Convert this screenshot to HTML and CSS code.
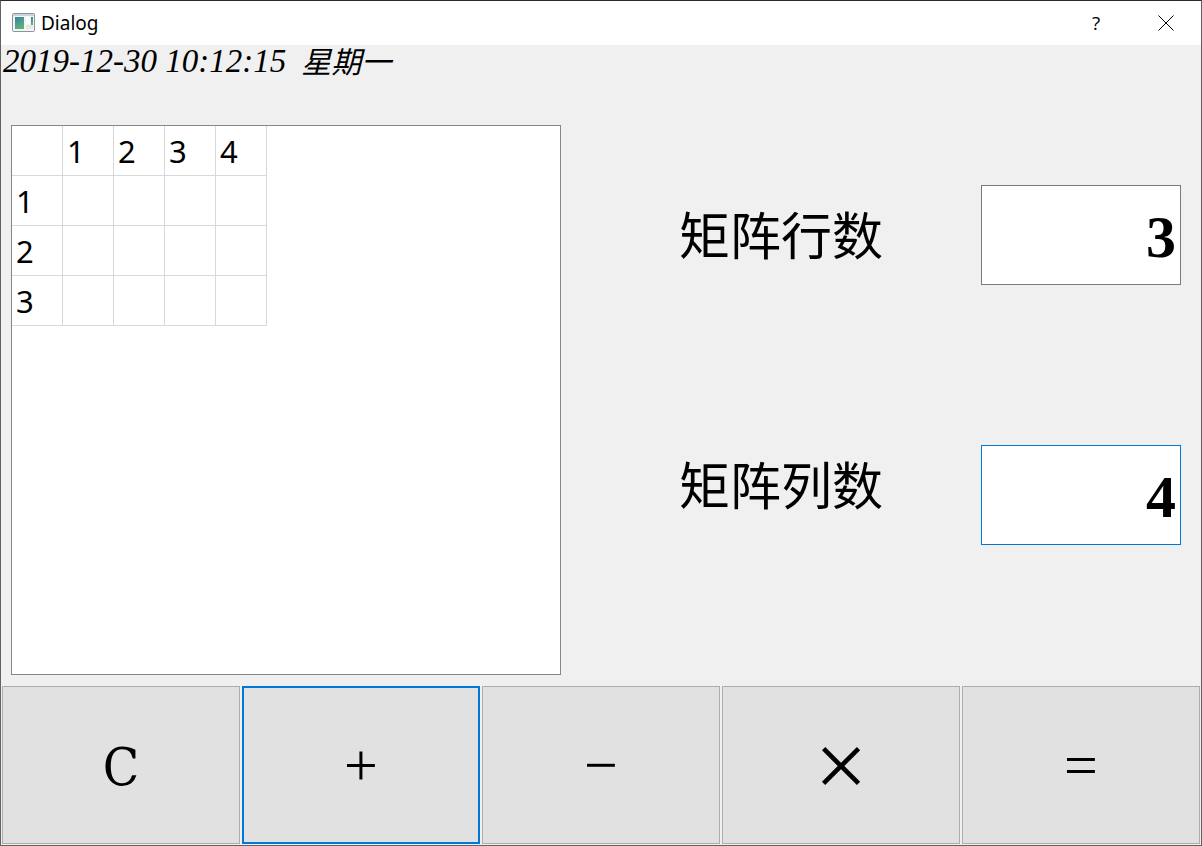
FILE: index.html
```
<!DOCTYPE html>
<html lang="zh-CN">
<head>
<meta charset="utf-8">
<meta name="viewport" content="width=device-width, initial-scale=1">
<title>Dialog</title>
<link rel="stylesheet" href="styles.css">
</head>
<body>
<div class="dialog">
  <header class="titlebar">
    <svg class="app-icon" viewBox="0 0 24 20" aria-hidden="true">
      <defs>
        <linearGradient id="pane" x1="0" y1="0" x2="0.4" y2="1">
          <stop offset="0" stop-color="#3d7fa5"/>
          <stop offset="1" stop-color="#5cb377"/>
        </linearGradient>
      </defs>
      <rect x="0.5" y="0.5" width="22" height="18" rx="1" fill="#f4f5f6" stroke="#8d9398"/>
      <rect x="1" y="1" width="21" height="2" fill="#ccd2da"/>
      <rect x="3" y="4" width="9" height="12" fill="url(#pane)"/>
      <rect x="14" y="4" width="4" height="7" fill="#fff"/>
      <rect x="14" y="12" width="7" height="4" fill="#e6e6e6"/>
      <rect x="19" y="4" width="2" height="8" fill="url(#pane)"/>
    </svg>
    <h1 class="title">Dialog</h1>
    <button class="caption-button" type="button" aria-label="Help">?</button>
    <button class="caption-button" type="button" aria-label="Close">
      <svg class="close-icon" viewBox="0 0 16 16" aria-hidden="true"><path d="M0.5 0.5 15.5 15.5M15.5 0.5 0.5 15.5" stroke="#000" fill="none"/></svg>
    </button>
  </header>
  <p class="clock"><span>2019-12-30 10:12:15</span><span class="weekday">星期一</span></p>
  <main class="content">
    <div class="table-frame">
      <table class="matrix">
        <tr><td></td><td>1</td><td>2</td><td>3</td><td>4</td></tr>
        <tr><td>1</td><td></td><td></td><td></td><td></td></tr>
        <tr><td>2</td><td></td><td></td><td></td><td></td></tr>
        <tr><td>3</td><td></td><td></td><td></td><td></td></tr>
      </table>
    </div>
    <form class="settings">
      <div class="field">
        <label class="field-label" for="rows">矩阵行数</label>
        <input class="field-input" id="rows" type="text" value="3">
      </div>
      <div class="field">
        <label class="field-label field-label-short" for="cols">矩阵列数</label>
        <input class="field-input field-input-active" id="cols" type="text" value="4">
      </div>
    </form>
  </main>
  <div class="keys">
    <button class="key key-letter" type="button">C</button>
    <button class="key key-default" type="button">+</button>
    <button class="key" type="button">−</button>
    <button class="key key-times" type="button">×</button>
    <button class="key" type="button">=</button>
  </div>
</div>
</body>
</html>
```
FILE: styles.css
```
* { box-sizing: border-box; }
body { margin: 0; color: #000; }

.dialog {
  display: flex;
  flex-direction: column;
  min-height: 100vh;
  background: #f0f0f0;
  border: 1px solid #626262;
  border-top-color: #2b292b;
}

.titlebar {
  display: flex;
  align-items: center;
  height: 44px;
  padding-left: 11px;
  background: #fff;
}
.app-icon { width: 24px; height: 20px; }
.title {
  flex: 1;
  margin: 0 0 0 5px;
  font: 400 19px/24px "Noto Sans", sans-serif;
}
.caption-button {
  display: flex;
  align-items: center;
  justify-content: center;
  width: 70px;
  height: 44px;
  padding: 0;
  border: 0;
  background: transparent;
  color: #000;
  font: 19px "Open Sans", sans-serif;
}
.close-icon { width: 16px; height: 16px; }

.clock {
  display: flex;
  gap: 15px;
  margin: 0 0 48px;
  padding-left: 2px;
  font: italic 33px/32px "Liberation Serif", serif;
}
.weekday {
  font: italic 30px/30px "Noto Sans CJK SC", sans-serif;
}

.content {
  display: grid;
  grid-template-columns: 550fr 502fr;
  column-gap: 118px;
  flex: 1;
  padding: 0 20px 0 10px;
}
.table-frame {
  min-height: 550px;
  background: #fff;
  border: 1px solid #828790;
}
.matrix {
  border-collapse: separate;
  border-spacing: 0;
  table-layout: fixed;
  width: 255px;
  font: 31px/40px "Noto Sans", sans-serif;
}
.matrix td {
  height: 50px;
  padding: 0 4px;
  border: solid #d8d8d8;
  border-width: 0 1px 1px 0;
}

.settings {
  display: flex;
  flex-direction: column;
  gap: 160px;
  padding-top: 60px;
}
.field {
  display: flex;
  justify-content: space-between;
}
.field-label {
  font: 51px/96px "Noto Sans CJK SC", sans-serif;
  white-space: nowrap;
}
.field-label-short { line-height: 76px; }
.field-input {
  width: 200px;
  height: 100px;
  padding: 4px 4px 0;
  border: 1px solid #7a7a7a;
  border-radius: 0;
  background: #fff;
  color: #000;
  font: bold 60px "Liberation Serif", serif;
  text-align: right;
  outline: 0;
}
.field-input-active { border-color: #0078d7; }

.keys {
  display: grid;
  grid-template-columns: repeat(5, 1fr);
  gap: 2px;
  height: 170px;
  padding: 11px 1px 1px;
}
.key {
  padding: 0;
  border: 1px solid #adadad;
  border-radius: 0;
  background: #e1e1e1;
  color: #000;
  font: 60px/60px "Liberation Serif", serif;
}
.key-default { border: 2px solid #0078d7; }
.key-letter {
  padding-top: 4px;
  font: 53px/60px "DejaVu Serif Condensed", "DejaVu Serif", serif;
}
.key-times { font-size: 94px; }
```
